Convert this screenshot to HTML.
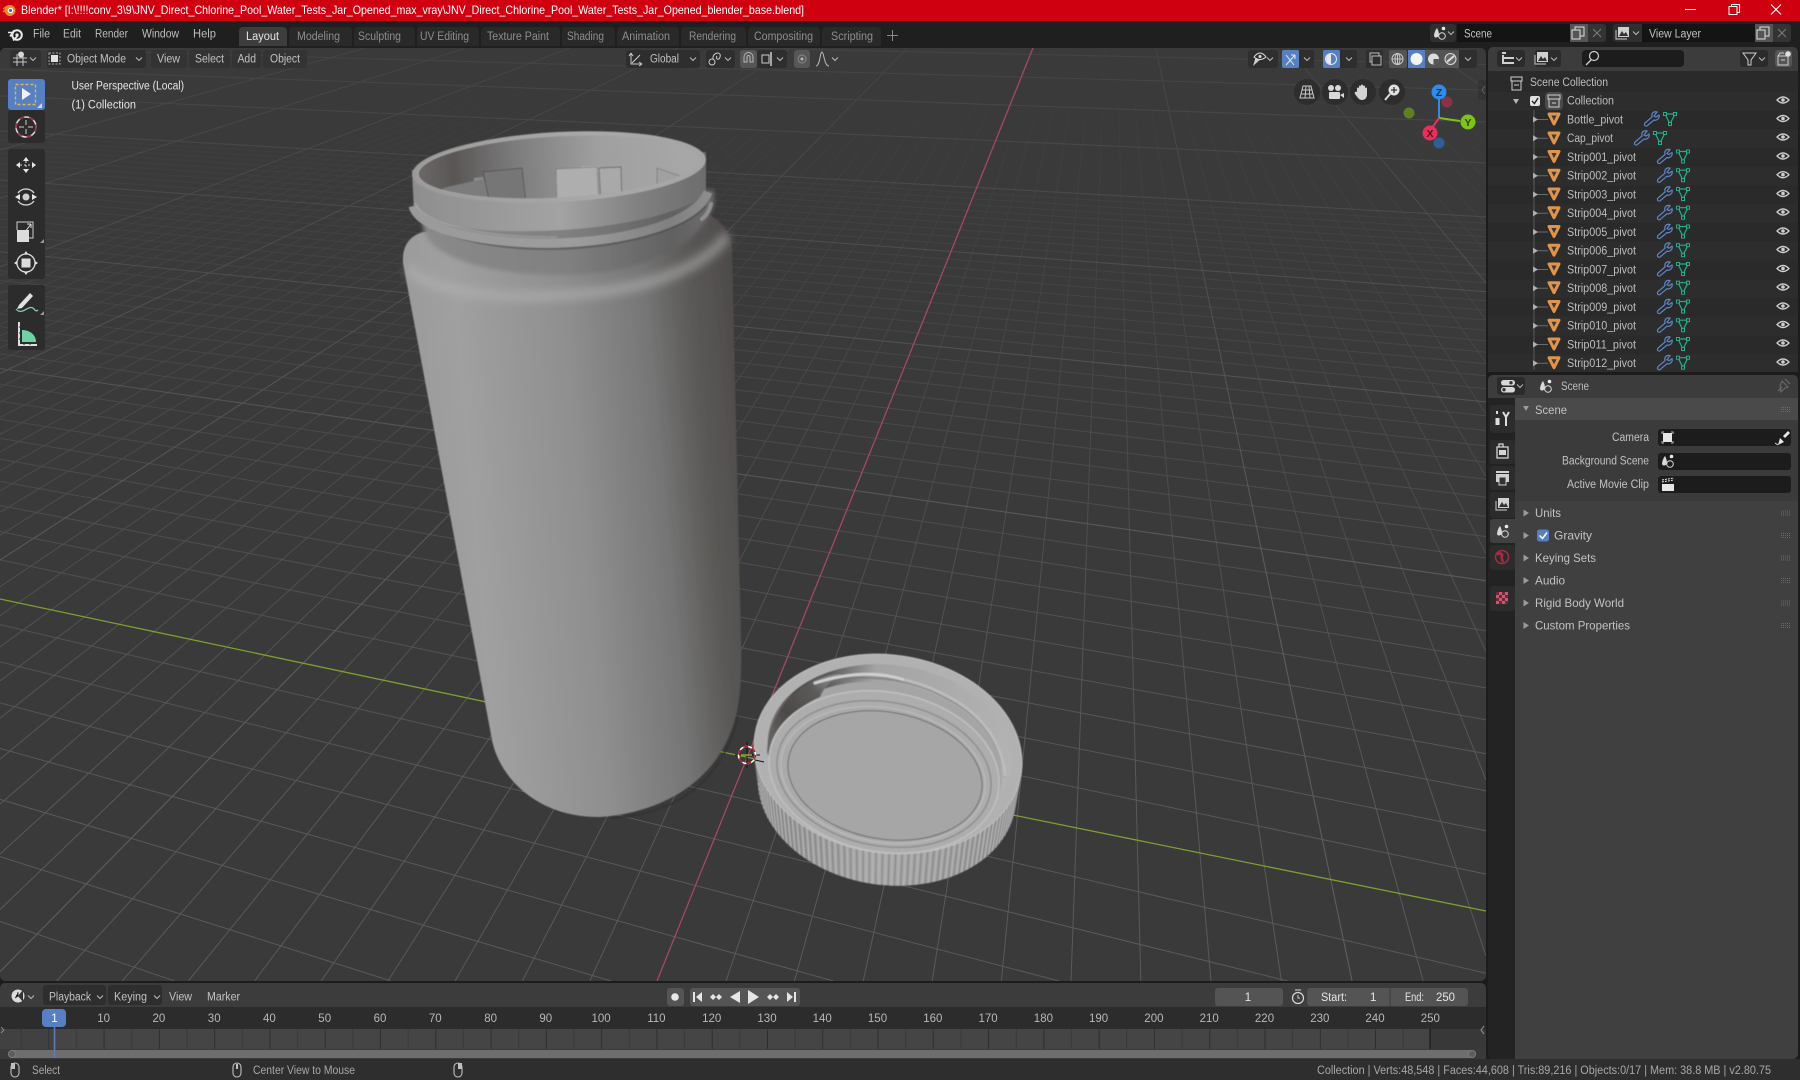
<!DOCTYPE html>
<html><head><meta charset="utf-8"><title>Blender</title>
<style>
html,body{margin:0;padding:0;background:#1c1c1c;width:1800px;height:1080px;overflow:hidden}
svg{display:block;position:absolute;left:0;top:0}
text{font-family:"Liberation Sans",sans-serif;font-size:11.5px;fill:#c2c2c2}
.t{fill:#8e8e8e}
.w{fill:#e6e6e6}
.o{fill:#bdbdbd}
.m{text-anchor:middle}
.e{text-anchor:end}
.n{fill:#b8b8b8;text-anchor:middle;font-size:11.5px}
.s{fill:#a8a8a8}
</style></head><body>
<svg width="1800" height="1080" viewBox="0 0 1800 1080" xmlns="http://www.w3.org/2000/svg">
<defs>
<clipPath id="vp"><rect x="0" y="48" width="1486" height="933" rx="5"/></clipPath>
<linearGradient id="fadeG" gradientUnits="userSpaceOnUse" x1="0" y1="90" x2="0" y2="800"><stop offset="0" stop-color="#111"/><stop offset="1" stop-color="#fff"/></linearGradient>
<mask id="fade" maskUnits="userSpaceOnUse" x="0" y="0" width="1800" height="1080"><rect width="1800" height="1080" fill="url(#fadeG)"/></mask>
<linearGradient id="fadeH" gradientUnits="userSpaceOnUse" x1="0" y1="48" x2="0" y2="620"><stop offset="0" stop-color="#444"/><stop offset="1" stop-color="#fff"/></linearGradient>
<mask id="fade2" maskUnits="userSpaceOnUse" x="0" y="0" width="1800" height="1080"><rect width="1800" height="1080" fill="url(#fadeH)"/></mask>
<linearGradient id="body" gradientUnits="userSpaceOnUse" x1="410" y1="470" x2="745" y2="440"><stop offset="0" stop-color="#9a9a9a"/><stop offset=".18" stop-color="#a0a0a0"/><stop offset=".5" stop-color="#8f8f8f"/><stop offset=".74" stop-color="#767676"/><stop offset=".87" stop-color="#5c5a58"/><stop offset="1" stop-color="#4e4b4a"/></linearGradient>
<linearGradient id="neck" gradientUnits="userSpaceOnUse" x1="420" y1="0" x2="715" y2="0"><stop offset="0" stop-color="#8a8a8a"/><stop offset=".5" stop-color="#808080"/><stop offset=".85" stop-color="#626161"/><stop offset="1" stop-color="#6c6b6b"/></linearGradient>
<linearGradient id="cyl" gradientUnits="userSpaceOnUse" x1="412" y1="0" x2="708" y2="0"><stop offset="0" stop-color="#8e8e8e"/><stop offset=".5" stop-color="#a3a3a3"/><stop offset=".78" stop-color="#7f7f7f"/><stop offset="1" stop-color="#6c6c6c"/></linearGradient>
<linearGradient id="lip" gradientUnits="userSpaceOnUse" x1="412" y1="0" x2="708" y2="0"><stop offset="0" stop-color="#9a9a9a"/><stop offset=".6" stop-color="#a9a9a9"/><stop offset="1" stop-color="#a5a5a5"/></linearGradient>
<linearGradient id="inner" gradientUnits="userSpaceOnUse" x1="420" y1="0" x2="698" y2="0"><stop offset="0" stop-color="#6b6766"/><stop offset=".12" stop-color="#595655"/><stop offset=".35" stop-color="#7d7d7d"/><stop offset=".65" stop-color="#a0a0a0"/><stop offset="1" stop-color="#a8a8a8"/></linearGradient>
<linearGradient id="ring" gradientUnits="userSpaceOnUse" x1="410" y1="0" x2="715" y2="0"><stop offset="0" stop-color="#9a9a9a"/><stop offset=".55" stop-color="#9d9d9d"/><stop offset=".85" stop-color="#808080"/><stop offset="1" stop-color="#8f8f8f"/></linearGradient>
<linearGradient id="capWall" gradientUnits="userSpaceOnUse" x1="767" y1="720" x2="1012" y2="740"><stop offset="0" stop-color="#7c7a79"/><stop offset=".08" stop-color="#4e4b4a"/><stop offset=".2" stop-color="#5e5c5b"/><stop offset=".38" stop-color="#a4a4a4"/><stop offset="1" stop-color="#b3b3b3"/></linearGradient>
<linearGradient id="cres" gradientUnits="userSpaceOnUse" x1="768" y1="740" x2="835" y2="680"><stop offset="0" stop-color="#686665"/><stop offset=".35" stop-color="#4c4948"/><stop offset=".75" stop-color="#5c5a59"/><stop offset="1" stop-color="#8c8c8c"/></linearGradient>
<linearGradient id="skirt" gradientUnits="userSpaceOnUse" x1="760" y1="800" x2="1020" y2="830"><stop offset="0" stop-color="#8f8f8f"/><stop offset=".5" stop-color="#a8a8a8"/><stop offset="1" stop-color="#9a9a9a"/></linearGradient>
<filter id="b1" x="-5%" y="-5%" width="110%" height="110%"><feGaussianBlur stdDeviation=".5"/></filter>
<filter id="b3" x="-20%" y="-20%" width="140%" height="140%"><feGaussianBlur stdDeviation="5"/></filter>
<filter id="b2" x="-10%" y="-10%" width="120%" height="120%"><feGaussianBlur stdDeviation="2"/></filter>
<pattern id="rows" patternUnits="userSpaceOnUse" width="10" height="37.5" patternTransform="translate(0,73)"><rect width="10" height="18.75" fill="#2a2a2a"/><rect y="18.75" width="10" height="18.75" fill="#2d2d2d"/></pattern>
<pattern id="tl" patternUnits="userSpaceOnUse" width="55.28" height="10" patternTransform="translate(103.6,0)"><rect width="55.28" height="10" fill="#454545"/><rect width="1" height="10" fill="#2f2f2f"/><rect x="27.6" width="1" height="10" fill="#383838"/></pattern>
<g id="eye"><path d="M-6,0Q0,-6 6,0Q0,6 -6,0Z" fill="none" stroke="#cfcfcf" stroke-width="1.3"/><circle r="1.8" fill="#cfcfcf"/></g>
<g id="wr"><path d="M6,-7C3,-8 0,-6 1,-2L-6,4C-8,7 -4,8 -3,6L3,1C6,2 9,-1 8,-4L5,-2L3,-3Z" fill="none" stroke="#5f86c6" stroke-width="1.2"/></g>
<g id="ms"><path d="M-5,-5H5L0,5Z" fill="none" stroke="#1fb08a" stroke-width="1.2"/><rect x="-6.5" y="-6.5" width="3" height="3" fill="#2a2a2a" stroke="#1fb08a"/><rect x="3.5" y="-6.5" width="3" height="3" fill="#2a2a2a" stroke="#1fb08a"/><rect x="-1.5" y="3.5" width="3" height="3" fill="#2a2a2a" stroke="#1fb08a"/></g>
<g id="ob"><path d="M-5,-5H5L0,5Z" fill="#3a3a3a" stroke="#e0944c" stroke-width="3" stroke-linejoin="round"/></g>
<g id="chev"><path d="M-3,-1.5L0,1.5L3,-1.5" fill="none" stroke="#b5b5b5" stroke-width="1.1"/></g>
<g id="scn"><path d="M-6,3C-6,0 -4,-4 -3,-5C-2,-3 -1,-1 -1,2C-1,4 -5,6 -6,3Z" fill="#d8d8d8"/><circle cx="2" cy="3" r="3.3" fill="none" stroke="#d8d8d8" stroke-width="1"/><circle cx="3.5" cy="-4.5" r="1.8" fill="#e8e8e8"/></g>
<g id="img"><rect x="-5" y="-6" width="11" height="10" fill="#d0d0d0"/><path d="M-4,3L-1,-2L1,1L3,-1L5,3Z" fill="#333"/><path d="M-7,-3V6H4" fill="none" stroke="#b0b0b0" stroke-width="1.2"/></g>
<g id="copy"><rect x="-3" y="-6" width="9" height="9" fill="none" stroke="#d5d5d5" stroke-width="1.1"/><rect x="-6" y="-3" width="8" height="9" fill="#555" stroke="#d5d5d5" stroke-width="1.1"/></g>
<g id="x"><path d="M-4,-4L4,4M4,-4L-4,4" stroke="#7a7a7a" stroke-width="1.1"/></g>
<g id="grip"><path d="M-5,-2h10M-5,0h10M-5,2h10" stroke="#6a6a6a" stroke-dasharray="1 1" stroke-width="1"/></g>
<g id="arr"><path d="M-2.5,-3.5L3,0L-2.5,3.5Z" fill="#9a9a9a"/></g>
<g id="mouse"><rect x="-4" y="-7" width="8" height="14" rx="4" fill="none" stroke="#c0c0c0" stroke-width="1.1"/></g>
</defs>

<!-- window bg -->
<rect width="1800" height="1080" fill="#1c1c1c"/>
<!-- title bar -->
<rect width="1800" height="21" fill="#cf000f"/>
<circle cx="10" cy="10.500" r="5.500" fill="#f08a2c"/><circle cx="10.500" cy="10.500" r="2.800" fill="#fff"/><circle cx="10.500" cy="10.500" r="1.500" fill="#2a6ab0"/><path d="M3,12L7,8M3,9L7,6" stroke="#f08a2c" stroke-width="1.300"/>
<text x="21" y="14" textLength="783" lengthAdjust="spacingAndGlyphs" style="fill:#fff;font-size:12px">Blender* [I:\!!!!conv_3\9\JNV_Direct_Chlorine_Pool_Water_Tests_Jar_Opened_max_vray\JNV_Direct_Chlorine_Pool_Water_Tests_Jar_Opened_blender_base.blend]</text>
<path d="M1685,9.500H1696" stroke="#fff" stroke-width="1"/>
<rect x="1729" y="6.500" width="8" height="8" fill="none" stroke="#fff"/><path d="M1731.500,6.500V4.500H1739.500V12.500H1737" fill="none" stroke="#fff"/>
<path d="M1771,4.500L1781,14.500M1781,4.500L1771,14.500" stroke="#fff" stroke-width="1.100"/>

<!-- top bar -->
<rect y="21" width="1800" height="27" fill="#1f1f1f"/>
<circle cx="17" cy="35" r="4.800" fill="none" stroke="#e8e8e8" stroke-width="2"/><circle cx="17" cy="35" r="1.600" fill="#e8e8e8"/><path d="M8,32.500H14M10,36.500L14,30.500M13,40.500L18,35.500" stroke="#e8e8e8" stroke-width="1.600"/>
<text x="33" y="37.500" textLength="17" lengthAdjust="spacingAndGlyphs" class="o">File</text>
<text x="63" y="37.500" textLength="18" lengthAdjust="spacingAndGlyphs" class="o">Edit</text>
<text x="95" y="37.500" textLength="33" lengthAdjust="spacingAndGlyphs" class="o">Render</text>
<text x="142" y="37.500" textLength="37" lengthAdjust="spacingAndGlyphs" class="o">Window</text>
<text x="193" y="37.500" textLength="23" lengthAdjust="spacingAndGlyphs" class="o">Help</text>
<path d="M239,46V31a4,4 0 0 1 4,-4H283a4,4 0 0 1 4,4V46Z" fill="#3d3d3d"/>
<path d="M289,46V31a4,4 0 0 1 4,-4H348a4,4 0 0 1 4,4V46Z M354,46V31a4,4 0 0 1 4,-4H411a4,4 0 0 1 4,4V46Z M417,46V31a4,4 0 0 1 4,-4H475a4,4 0 0 1 4,4V46Z M481,46V31a4,4 0 0 1 4,-4H556a4,4 0 0 1 4,4V46Z M562,46V31a4,4 0 0 1 4,-4H611a4,4 0 0 1 4,4V46Z M617,46V31a4,4 0 0 1 4,-4H675a4,4 0 0 1 4,4V46Z M681,46V31a4,4 0 0 1 4,-4H742a4,4 0 0 1 4,4V46Z M748,46V31a4,4 0 0 1 4,-4H816a4,4 0 0 1 4,4V46Z M822,46V31a4,4 0 0 1 4,-4H877a4,4 0 0 1 4,4V46Z" fill="#292929"/>
<text x="246" y="40" textLength="33" lengthAdjust="spacingAndGlyphs" class="w">Layout</text>
<text x="297" y="40" textLength="43" lengthAdjust="spacingAndGlyphs" class="t">Modeling</text>
<text x="358" y="40" textLength="43" lengthAdjust="spacingAndGlyphs" class="t">Sculpting</text>
<text x="420" y="40" textLength="49" lengthAdjust="spacingAndGlyphs" class="t">UV Editing</text>
<text x="487" y="40" textLength="62" lengthAdjust="spacingAndGlyphs" class="t">Texture Paint</text>
<text x="567" y="40" textLength="37" lengthAdjust="spacingAndGlyphs" class="t">Shading</text>
<text x="622" y="40" textLength="48" lengthAdjust="spacingAndGlyphs" class="t">Animation</text>
<text x="689" y="40" textLength="47" lengthAdjust="spacingAndGlyphs" class="t">Rendering</text>
<text x="754" y="40" textLength="59" lengthAdjust="spacingAndGlyphs" class="t">Compositing</text>
<text x="831" y="40" textLength="42" lengthAdjust="spacingAndGlyphs" class="t">Scripting</text>
<path d="M887,35.500H898M892.500,30V41" stroke="#8a8a8a"/>

<!-- scene selector -->
<rect x="1430" y="24" width="26" height="18" rx="3" fill="#2f2f2f"/>
<use href="#scn" x="1440" y="33"/><use href="#chev" x="1451" y="33"/>
<rect x="1457" y="24" width="113" height="18" fill="#141414"/>
<text x="1464" y="37.500" textLength="28" lengthAdjust="spacingAndGlyphs">Scene</text>
<rect x="1570" y="24" width="18" height="18" fill="#545454"/><use href="#copy" x="1578" y="33"/>
<path d="M1588,24H1603a3,3 0 0 1 3,3V39a3,3 0 0 1 -3,3H1588Z" fill="#333"/><use href="#x" x="1597" y="33"/>
<path d="M1616,24H1642V42H1616a3,3 0 0 1 -3,-3V27a3,3 0 0 1 3,-3Z" fill="#2f2f2f"/>
<use href="#img" x="1623" y="33"/><use href="#chev" x="1636" y="33"/>
<rect x="1642" y="24" width="113" height="18" fill="#141414"/>
<text x="1649" y="37.500" textLength="52" lengthAdjust="spacingAndGlyphs">View Layer</text>
<rect x="1755" y="24" width="18" height="18" fill="#545454"/><use href="#copy" x="1763" y="33"/>
<path d="M1773,24H1788a3,3 0 0 1 3,3V39a3,3 0 0 1 -3,3H1773Z" fill="#333"/><use href="#x" x="1782" y="33"/>

<!-- VIEWPORT -->
<g clip-path="url(#vp)">
<rect x="0" y="48" width="1486" height="933" fill="#3a3a3a"/>
<g id="gridMinor" stroke="#5a5a5a" stroke-width="1" mask="url(#fade)"></g>
<g id="gridMajor" stroke="#5e5e5e" stroke-width="1.100" mask="url(#fade2)"></g>
<path d="M0,599L760,760" stroke="#7f9f2f" stroke-width="1.300"/>
<path d="M880,788L1486,911" stroke="#7f9f2f" stroke-width="1.300"/>
<path d="M657,981L1033,48" stroke="#a24a5e" stroke-width="1.300"/>

<!-- BOTTLE -->
<g filter="url(#b1)">
<path d="M610,818C680,815 724,777 738,716" fill="none" stroke="#333" stroke-width="1.500"/>
<path d="M403,263C402,245 410,236 423,232L710,215C722,222 731,232 732,250L741,640C742,675 740,700 736,715C722,775 670,812 600,817C540,818 500,780 492,740Z" fill="url(#body)"/>
<path d="M408,268C440,300 530,300 600,292C660,285 710,262 727,235" fill="none" stroke="#b3b3b3" stroke-width="9" opacity=".7" filter="url(#b3)"/>
<path d="M423,225C425,255 480,274 557,275C630,275 695,255 714,205L714,190L423,190Z" fill="url(#neck)" filter="url(#b2)"/>
<path d="M412,170L414,212C440,240 640,240 706,195L706,152Z" fill="url(#cyl)"/>
<path d="M418,216C440,240 500,250 557,249C625,247 685,230 706,206" fill="none" stroke="#4a4a4a" stroke-width="2" opacity=".55"/>
<path d="M413,206C420,232 490,244 557,243C630,241 696,222 708,192" fill="none" stroke="url(#ring)" stroke-width="9"/>
<path d="M415,203C425,226 490,238 557,237" fill="none" stroke="#b2b2b2" stroke-width="1.500" opacity=".5"/>
<path d="M702,219C707,215 710,209 711,204" stroke="#8f8f8f" stroke-width="4" fill="none" stroke-linecap="round"/>
<ellipse cx="559" cy="167" rx="147" ry="35" transform="rotate(-3 559 167)" fill="url(#lip)"/>
<ellipse cx="558" cy="167" rx="140" ry="31" transform="rotate(-3 558 167)" fill="url(#inner)"/>
<clipPath id="op"><ellipse cx="558" cy="167" rx="140" ry="31" transform="rotate(-3 558 167)"/></clipPath>
<g clip-path="url(#op)">
<path d="M474,178L483,177L490,200H474Z" fill="#8c8c8c"/>
<path d="M443,188L483,179L490,200L443,204Z" fill="#7c7c7c"/>
<path d="M483,172L522,168L526,204L490,204Z" fill="#767676" stroke="#4a4a4a" stroke-width=".7"/>
<path d="M581,166H598L599,172H581Z" fill="#a9a9a9"/>
<path d="M556,169L597,167L599,204L557,204Z" fill="#aeaeae" stroke="#6c6c6c" stroke-width=".5"/>
<path d="M599,168L621,167L622,204L601,204Z" fill="#a9a9a9" stroke="#555" stroke-width=".7"/>
<path d="M657,168L683,177L657,184Z" fill="#a0a0a0" stroke="#6a6a6a" stroke-width=".6"/>
</g>
<ellipse cx="558" cy="167" rx="140" ry="31" transform="rotate(-3 558 167)" fill="none" stroke="#a6a6a6" stroke-width="1"/>
</g>

<!-- CAP -->
<g filter="url(#b1)">
<path d="M753.500,745.500L758,782L1016,798L1022.500,762.500Z" fill="url(#skirt)"/>
<ellipse cx="887" cy="790" rx="129" ry="95" transform="rotate(8 887 790)" fill="url(#skirt)"/>
<g id="knurl" stroke-width="1"></g>
<ellipse cx="888" cy="754" rx="134.500" ry="99" transform="rotate(8 888 754)" fill="#b1b1b1" stroke="#c0c0c0" stroke-width="1"/>
<ellipse cx="889.500" cy="752" rx="122.500" ry="87" transform="rotate(8 889.500 752)" fill="url(#capWall)"/>
<ellipse cx="885" cy="765" rx="118" ry="82" transform="rotate(10 885 765)" fill="#a5a5a5"/>
<path d="M767,752C768,722 785,694 815,680C825,676 835,674 842,674C832,680 826,684 820,697C795,708 775,728 770,760Z" fill="url(#cres)"/>
<path d="M815,685C850,674 905,674 945,697C985,717 1002,747 1005,777" fill="none" stroke="#757575" stroke-width="2.500" opacity=".55"/>
<path d="M815,683C850,672 880,672 905,680" fill="none" stroke="#cfcfcf" stroke-width="3" stroke-linecap="round"/>
<path d="M905,680C925,685 935,690 945,695C985,715 1002,745 1005,775" fill="none" stroke="#bcbcbc" stroke-width="3" stroke-linecap="round"/>
<ellipse cx="884" cy="772" rx="116" ry="80" transform="rotate(10 884 772)" fill="#adadad" stroke="#c0c0c0" stroke-width="1.500"/>
<ellipse cx="884" cy="774" rx="108" ry="72" transform="rotate(10 884 774)" fill="none" stroke="#8e8e8e" stroke-width="1.500"/>
<ellipse cx="883" cy="775" rx="103" ry="67" transform="rotate(10 883 775)" fill="#aaaaaa" stroke="#bdbdbd" stroke-width="1"/>
<ellipse cx="885" cy="775.500" rx="98" ry="63.500" transform="rotate(10 885 775.500)" fill="#a6a6a6" stroke="#6b6b6b" stroke-width="1"/>
</g>

<!-- 3D cursor -->
<g>
<path d="M735,755H760M747,742V768M755,760L764,762" stroke="#111" stroke-width="1"/>
<circle cx="747" cy="755" r="8.500" fill="none" stroke="#fff" stroke-width="1.500"/>
<circle cx="747" cy="755" r="8.500" fill="none" stroke="#c0142e" stroke-width="1.500" stroke-dasharray="5 4"/>
<path d="M741,755H752" stroke="#88aa33" stroke-width="1.500"/>
</g>

<!-- text overlay -->
<text x="71.500" y="89.500" textLength="112.500" lengthAdjust="spacingAndGlyphs" class="w">User Perspective (Local)</text>
<text x="71.500" y="108.500" textLength="64.500" lengthAdjust="spacingAndGlyphs" class="w">(1) Collection</text>

<!-- viewport header -->
<rect x="10" y="50" width="31" height="18" rx="3" fill="#2e2e2e" opacity=".7"/>
<path d="M13,58H27M13,62H27M17,54V66M23,54V66" stroke="#c5c5c5" stroke-width="1"/><circle cx="21" cy="54.500" r="3" fill="#d8d8d8"/><use href="#chev" x="33" y="59"/>
<rect x="47" y="50" width="99" height="18" rx="3" fill="#2e2e2e"/>
<rect x="49" y="53" width="11" height="11" fill="none" stroke="#aaa" stroke-dasharray="2 1.500"/><rect x="51" y="55" width="7" height="7" fill="#e0e0e0"/>
<text x="67" y="62.500" textLength="59" lengthAdjust="spacingAndGlyphs">Object Mode</text><use href="#chev" x="139" y="59"/>
<rect x="151" y="50" width="36" height="18" rx="3" fill="#2e2e2e" opacity=".6"/><rect x="189" y="50" width="41" height="18" rx="3" fill="#2e2e2e" opacity=".6"/><rect x="232" y="50" width="29" height="18" rx="3" fill="#2e2e2e" opacity=".6"/><rect x="263" y="50" width="44" height="18" rx="3" fill="#2e2e2e" opacity=".6"/>
<text x="157" y="62.500" textLength="23" lengthAdjust="spacingAndGlyphs">View</text>
<text x="195" y="62.500" textLength="29" lengthAdjust="spacingAndGlyphs">Select</text>
<text x="237.500" y="62.500" textLength="18.500" lengthAdjust="spacingAndGlyphs">Add</text>
<text x="270" y="62.500" textLength="30" lengthAdjust="spacingAndGlyphs">Object</text>

<rect x="626" y="50" width="74" height="18" rx="3" fill="#2e2e2e"/>
<path d="M631,53V64H642M631,53L629,56M631,53L633,56M642,64L639,62M642,64L639,66M632,63L640,55" fill="none" stroke="#c8c8c8"/>
<text x="650" y="62.500" textLength="29" lengthAdjust="spacingAndGlyphs">Global</text><use href="#chev" x="693" y="59"/>
<rect x="706" y="50" width="29" height="18" rx="3" fill="#2e2e2e"/>
<circle cx="712" cy="62" r="3" fill="none" stroke="#ccc"/><path d="M713,59C712,52 722,51 720,57C719,61 715,59 717,56" fill="none" stroke="#ccc"/><use href="#chev" x="728" y="59"/>
<rect x="740" y="50" width="17" height="18" rx="3" fill="#565656"/>
<path d="M744,62V57A4.500,4.500 0 0 1 753,57V62H750V57A1.500,1.500 0 0 0 747,57V62Z" fill="none" stroke="#b8b8b8"/>
<rect x="757" y="50" width="30" height="18" rx="3" fill="#2e2e2e"/>
<rect x="762" y="55" width="7" height="8" fill="none" stroke="#ccc"/><path d="M771,52V66" stroke="#ccc" stroke-width="1.500"/><use href="#chev" x="780" y="59"/>
<rect x="794" y="50" width="16" height="18" rx="3" fill="#565656"/><circle cx="802" cy="59" r="4" fill="none" stroke="#8a8a8a"/><circle cx="802" cy="59" r="1.500" fill="#b8b8b8"/>
<path d="M816,66C820,66 820,52 822,52C824,52 824,66 829,66" fill="none" stroke="#bbb"/><use href="#chev" x="835" y="59"/>

<rect x="1248" y="50" width="30" height="18" rx="3" fill="#2e2e2e"/>
<path d="M1253,66L1256,56L1262,58Z" fill="#ccc"/><path d="M1254,57Q1260,49 1266,57Q1260,62 1254,57Z" fill="#2e2e2e" stroke="#ddd"/><circle cx="1260" cy="56.500" r="1.500" fill="#ddd"/><use href="#chev" x="1270" y="59"/>
<rect x="1282" y="50" width="17" height="18" rx="2" fill="#5680c2"/><path d="M1286,65L1295,55M1295,55H1291M1295,55V59M1286,55L1294,65" stroke="#e8e8e8" fill="none"/><rect x="1299" y="50" width="15" height="18" rx="2" fill="#2e2e2e"/><use href="#chev" x="1307" y="59"/>
<rect x="1323" y="50" width="17" height="18" rx="2" fill="#5680c2"/><circle cx="1331" cy="59" r="5.500" fill="none" stroke="#e8e8e8"/><path d="M1331,54A5,5 0 0 0 1331,64Z" fill="#e8e8e8"/><rect x="1340" y="50" width="17" height="18" rx="2" fill="#2e2e2e"/><use href="#chev" x="1349" y="59"/>
<rect x="1366" y="50" width="17" height="18" rx="2" fill="#2e2e2e"/><rect x="1370" y="53" width="9" height="9" fill="none" stroke="#bbb"/><rect x="1372" y="56" width="9" height="9" fill="#2e2e2e" stroke="#bbb"/>
<rect x="1389" y="50" width="88" height="18" rx="3" fill="#2e2e2e"/>
<rect x="1389" y="50" width="18" height="18" rx="2" fill="#545454"/><rect x="1408" y="50" width="17" height="18" fill="#5680c2"/><rect x="1425" y="50" width="17" height="18" fill="#545454"/><rect x="1442" y="50" width="17" height="18" fill="#545454"/>
<circle cx="1397.500" cy="59" r="5.500" fill="none" stroke="#c8c8c8"/><path d="M1392,59H1403M1397.500,53.500V64.500" stroke="#c8c8c8"/><ellipse cx="1397.500" cy="59" rx="2.500" ry="5.500" fill="none" stroke="#c8c8c8"/>
<circle cx="1416.500" cy="59" r="6" fill="#f4f4f4"/>
<circle cx="1433.500" cy="59" r="5.500" fill="#dcdcdc"/><path d="M1433.500,59L1439,59A5.500,5.500 0 0 1 1433.500,64.500Z" fill="#555"/>
<circle cx="1450.500" cy="59" r="5.500" fill="#666" stroke="#ddd"/><path d="M1447,62L1454,56" stroke="#ddd" stroke-width="2"/>
<use href="#chev" x="1468" y="59"/>

<!-- nav gizmo -->
<circle cx="1307" cy="92" r="13" fill="#2d2d2d"/><circle cx="1335" cy="92" r="13" fill="#2d2d2d"/><circle cx="1363" cy="92" r="13" fill="#2d2d2d"/><circle cx="1392" cy="92" r="13" fill="#2d2d2d"/>
<path d="M1303,86H1311L1314,98H1300ZM1302,90H1312M1301,94H1313M1306,86L1305,98M1309,86L1310,98" fill="none" stroke="#c9c9c9"/>
<circle cx="1331" cy="88" r="3" fill="#d8d8d8"/><circle cx="1338" cy="88" r="3" fill="#d8d8d8"/><rect x="1329" y="92" width="11" height="7" rx="1" fill="#d8d8d8"/><path d="M1340,95L1344,93V98Z" fill="#d8d8d8"/>
<path d="M1357,92V88.500a1,1 0 0 1 2,0V86.500a1,1 0 0 1 2,0V85.500a1,1 0 0 1 2,0V86.500a1,1 0 0 1 2,0V88.500a1,1 0 0 1 2,0V94C1367,98 1365,100 1362,100C1359,100 1358,98 1355,94C1354,92 1356,91 1357,92Z" fill="#d4d4d4"/>
<circle cx="1394" cy="90" r="5.500" fill="#e0e0e0"/><path d="M1394,87V93M1391,90H1397" stroke="#333" stroke-width="1.300"/><path d="M1390,94L1385,100" stroke="#d8d8d8" stroke-width="2"/>

<circle cx="1447" cy="102" r="5.500" fill="#8a3246"/><circle cx="1409" cy="113" r="5.500" fill="#5e7f22"/><circle cx="1439" cy="143" r="5.500" fill="#2f5e96"/>
<path d="M1439,118V98" stroke="#2e8ceb" stroke-width="2"/><path d="M1439,118L1460,121" stroke="#7fc31a" stroke-width="2"/><path d="M1439,118L1432,128" stroke="#e8305a" stroke-width="2"/>
<circle cx="1439" cy="92" r="7.500" fill="#2e8ceb"/><text x="1439" y="96" class="m" style="fill:#14304d;font-size:10.500px;font-weight:bold">Z</text>
<circle cx="1468" cy="122" r="7.500" fill="#7fc31a"/><text x="1468" y="126" class="m" style="fill:#2b440a;font-size:10.500px;font-weight:bold">Y</text>
<circle cx="1430" cy="133" r="7.500" fill="#e8305a"/><text x="1430" y="137" class="m" style="fill:#54101f;font-size:10.500px;font-weight:bold">X</text>
<path d="M1485,86L1482,90L1485,94" fill="none" stroke="#888"/>
<rect x="1478" y="80" width="8" height="20" rx="3" fill="#2a2a2a" opacity=".4"/>

<!-- toolbar -->
<rect x="8" y="79" width="37" height="31" rx="3" fill="#5680c2"/>
<rect x="8" y="110" width="37" height="33" rx="3" fill="#2c2c2c"/>
<rect x="8" y="149" width="37" height="130" rx="3" fill="#2c2c2c"/>
<rect x="8" y="285" width="37" height="65" rx="3" fill="#2c2c2c"/>
<rect x="15.500" y="84.500" width="20" height="20" fill="none" stroke="#d8b75d" stroke-width="1.400" stroke-dasharray="3 2"/>
<path d="M22,88V100L31,94Z" fill="#f2f2f2"/><path d="M37,108L42,103V108Z" fill="#cfdcf0"/>
<circle cx="26" cy="127" r="10" fill="none" stroke="#dcdcdc" stroke-width="1.500"/><circle cx="26" cy="127" r="10" fill="none" stroke="#a42a45" stroke-width="1.500" stroke-dasharray="5 5"/><path d="M26,120V125M26,129V134M19,127H24M28,127H33" stroke="#cfcfcf"/>
<path d="M26,157L23,161H29ZM26,173L23,169H29ZM16,165L20,162V168ZM36,165L32,162V168Z" fill="#e6e6e6"/><path d="M26,161V169M20,165H32" stroke="#d8d8d8" stroke-dasharray="2 2"/>
<circle cx="26" cy="197" r="3.500" fill="#d0d0d0" transform="rotate(45 26 197)"/><path d="M18,193A10,10 0 0 1 34,193M34,201A10,10 0 0 1 18,201" fill="none" stroke="#dcdcdc" stroke-width="1.300"/><path d="M15,197L20,194V200ZM37,197L32,194V200Z" fill="#e6e6e6"/>
<rect x="17" y="230" width="12" height="12" fill="#dcdcdc"/><path d="M17,230V222H33V238H29" fill="none" stroke="#cfcfcf"/><path d="M25,232L31,224M31,224H27M31,224V228" stroke="#e0e0e0"/><path d="M40,243L44,239V243Z" fill="#999"/>
<circle cx="26" cy="263" r="9" fill="none" stroke="#dcdcdc" stroke-width="1.300"/><rect x="21.500" y="258.500" width="9" height="9" fill="#dcdcdc"/><path d="M26,251L24,254H28ZM26,275L24,272H28ZM14,263L17,261V265ZM38,263L35,261V265Z" fill="#e6e6e6"/>
<path d="M19,305L30,293L33,296L22,308L17,309Z" fill="#e2e2e2"/><path d="M16,309C22,316 28,305 33,308C35,310 36,312 38,310" fill="none" stroke="#7fd0a8" stroke-width="1.300"/><path d="M40,315L44,311V315Z" fill="#999"/>
<path d="M22,330V342H36C36,335 30,330 22,330Z" fill="#6dd3a4"/><path d="M19,322V345H37" fill="none" stroke="#e0e0e0" stroke-width="2"/><path d="M19,327H22M19,333H22M19,339H22M24,345V342M30,345V342" stroke="#2c2c2c"/>
</g>

<!-- OUTLINER -->
<rect x="1488" y="47" width="310" height="325" rx="5" fill="#2a2a2a"/>
<path d="M1488,71V52a5,5 0 0 1 5,-5H1793a5,5 0 0 1 5,5V71Z" fill="#3c3c3c"/>
<rect x="1488" y="73" width="310" height="299" fill="url(#rows)"/>
<rect x="1497" y="50" width="28" height="17" rx="3" fill="#2b2b2b"/>
<path d="M1502,53H1506M1505,58H1514M1505,63H1514M1503,55V63H1505M1503,58H1505" stroke="#d0d0d0" stroke-width="2" fill="none"/><use href="#chev" x="1519" y="59"/>
<rect x="1535" y="50" width="26" height="17" rx="3" fill="#2b2b2b"/><use href="#img" x="1542" y="58"/><use href="#chev" x="1554" y="59"/>
<rect x="1582" y="50" width="102" height="17" rx="4" fill="#1c1c1c"/>
<circle cx="1594" cy="56" r="4.500" fill="none" stroke="#d0d0d0" stroke-width="1.200"/><path d="M1591,60L1586,65" stroke="#d0d0d0" stroke-width="1.300"/>
<rect x="1740" y="50" width="28" height="17" rx="3" fill="#2b2b2b"/><path d="M1743,53H1756L1751,60V65L1748,65V60Z" fill="none" stroke="#cfcfcf" transform="translate(0,0)"/><use href="#chev" x="1762" y="59"/>
<rect x="1775" y="50" width="17" height="17" rx="3" fill="#565656"/><path d="M1778,56H1788V65H1778ZM1778,56L1780,53H1784M1781,60H1785" fill="none" stroke="#cfcfcf"/><circle cx="1788" cy="54" r="2.800" fill="#e0e0e0"/>

<path d="M1511,77H1522V81H1511ZM1512,81V90H1521V81M1514,85H1519" fill="none" stroke="#d0d0d0"/>
<text x="1530" y="86" textLength="78" lengthAdjust="spacingAndGlyphs" class="o">Scene Collection</text>
<path d="M1513,99L1519,99L1516,104Z" fill="#b5b5b5"/>
<rect x="1530" y="96" width="10" height="10" rx="2" fill="#e2e2e2"/><path d="M1532,101L1534.500,103.500L1538,98" fill="none" stroke="#222" stroke-width="1.400"/>
<rect x="1545" y="92" width="18" height="18" rx="4" fill="#4a4a4a"/>
<path d="M1548,95H1560V99H1548ZM1549,99V107H1559V99M1552,103H1556" fill="none" stroke="#d0d0d0"/>
<text x="1567" y="104.500" textLength="47" lengthAdjust="spacingAndGlyphs" class="o">Collection</text>
<path d="M1534,110V370" stroke="#5a5a5a"/>
<g id="tree" stroke="#6a6a6a"><path d="M1534,119.500H1548M1534,138.200H1548M1534,157H1548M1534,175.700H1548M1534,194.500H1548M1534,213.200H1548M1534,232H1548M1534,250.700H1548M1534,269.500H1548M1534,288.200H1548M1534,307H1548M1534,325.700H1548M1534,344.500H1548M1534,363.200H1548"/></g>
<g fill="#b0b0b0"><path d="M1533,116.500L1538,119.500L1533,122.500ZM1533,135.200L1538,138.200L1533,141.200ZM1533,154L1538,157L1533,160ZM1533,172.700L1538,175.700L1533,178.700ZM1533,191.500L1538,194.500L1533,197.500ZM1533,210.200L1538,213.200L1533,216.200ZM1533,229L1538,232L1533,235ZM1533,247.700L1538,250.700L1533,253.700ZM1533,266.500L1538,269.500L1533,272.500ZM1533,285.200L1538,288.200L1533,291.200ZM1533,304L1538,307L1533,310ZM1533,322.700L1538,325.700L1533,328.700ZM1533,341.500L1538,344.500L1533,347.500ZM1533,360.200L1538,363.200L1533,366.200Z"/></g>

<use href="#ob" x="1554" y="119"/><text x="1567" y="123.500" textLength="56" lengthAdjust="spacingAndGlyphs" class="o">Bottle_pivot</text><use href="#wr" x="1651" y="119"/><use href="#ms" x="1670" y="119"/>
<use href="#ob" x="1554" y="138"/><text x="1567" y="142" textLength="46" lengthAdjust="spacingAndGlyphs" class="o">Cap_pivot</text><use href="#wr" x="1641" y="138"/><use href="#ms" x="1660" y="138"/>
<use href="#ob" x="1554" y="156.500"/><text x="1567" y="161" textLength="69" lengthAdjust="spacingAndGlyphs" class="o">Strip001_pivot</text><use href="#wr" x="1664" y="156.500"/><use href="#ms" x="1683" y="156.500"/>
<use href="#ob" x="1554" y="175.200"/><text x="1567" y="179.700" textLength="69" lengthAdjust="spacingAndGlyphs" class="o">Strip002_pivot</text><use href="#wr" x="1664" y="175.200"/><use href="#ms" x="1683" y="175.200"/>
<use href="#ob" x="1554" y="194"/><text x="1567" y="198.500" textLength="69" lengthAdjust="spacingAndGlyphs" class="o">Strip003_pivot</text><use href="#wr" x="1664" y="194"/><use href="#ms" x="1683" y="194"/>
<use href="#ob" x="1554" y="212.700"/><text x="1567" y="217" textLength="69" lengthAdjust="spacingAndGlyphs" class="o">Strip004_pivot</text><use href="#wr" x="1664" y="212.700"/><use href="#ms" x="1683" y="212.700"/>
<use href="#ob" x="1554" y="231.500"/><text x="1567" y="236" textLength="69" lengthAdjust="spacingAndGlyphs" class="o">Strip005_pivot</text><use href="#wr" x="1664" y="231.500"/><use href="#ms" x="1683" y="231.500"/>
<use href="#ob" x="1554" y="250.200"/><text x="1567" y="254.700" textLength="69" lengthAdjust="spacingAndGlyphs" class="o">Strip006_pivot</text><use href="#wr" x="1664" y="250.200"/><use href="#ms" x="1683" y="250.200"/>
<use href="#ob" x="1554" y="269"/><text x="1567" y="273.500" textLength="69" lengthAdjust="spacingAndGlyphs" class="o">Strip007_pivot</text><use href="#wr" x="1664" y="269"/><use href="#ms" x="1683" y="269"/>
<use href="#ob" x="1554" y="287.700"/><text x="1567" y="292" textLength="69" lengthAdjust="spacingAndGlyphs" class="o">Strip008_pivot</text><use href="#wr" x="1664" y="287.700"/><use href="#ms" x="1683" y="287.700"/>
<use href="#ob" x="1554" y="306.500"/><text x="1567" y="311" textLength="69" lengthAdjust="spacingAndGlyphs" class="o">Strip009_pivot</text><use href="#wr" x="1664" y="306.500"/><use href="#ms" x="1683" y="306.500"/>
<use href="#ob" x="1554" y="325.200"/><text x="1567" y="329.700" textLength="69" lengthAdjust="spacingAndGlyphs" class="o">Strip010_pivot</text><use href="#wr" x="1664" y="325.200"/><use href="#ms" x="1683" y="325.200"/>
<use href="#ob" x="1554" y="344"/><text x="1567" y="348.500" textLength="69" lengthAdjust="spacingAndGlyphs" class="o">Strip011_pivot</text><use href="#wr" x="1664" y="344"/><use href="#ms" x="1683" y="344"/>
<use href="#ob" x="1554" y="362.700"/><text x="1567" y="367" textLength="69" lengthAdjust="spacingAndGlyphs" class="o">Strip012_pivot</text><use href="#wr" x="1664" y="362.700"/><use href="#ms" x="1683" y="362.700"/>
<use href="#eye" x="1783" y="100"/><use href="#eye" x="1783" y="118.500"/><use href="#eye" x="1783" y="137"/><use href="#eye" x="1783" y="156"/><use href="#eye" x="1783" y="174.700"/><use href="#eye" x="1783" y="193.500"/><use href="#eye" x="1783" y="212"/><use href="#eye" x="1783" y="231"/><use href="#eye" x="1783" y="249.500"/><use href="#eye" x="1783" y="268.500"/><use href="#eye" x="1783" y="287"/><use href="#eye" x="1783" y="306"/><use href="#eye" x="1783" y="324.500"/><use href="#eye" x="1783" y="343"/><use href="#eye" x="1783" y="362"/>

<!-- PROPERTIES -->
<rect x="1488" y="375" width="310" height="684" rx="5" fill="#404040"/>
<path d="M1488,398V380a5,5 0 0 1 5,-5H1793a5,5 0 0 1 5,5V398Z" fill="#3c3c3c"/>
<path d="M1488,398H1515V1059H1493a5,5 0 0 1 -5,-5Z" fill="#232323"/>
<rect x="1497" y="377" width="28" height="18" rx="3" fill="#2b2b2b"/>
<rect x="1501" y="380" width="14" height="5.500" rx="2.700" fill="#d8d8d8"/><rect x="1501" y="387" width="14" height="5.500" rx="2.700" fill="#d8d8d8"/><circle cx="1511" cy="382.700" r="1.700" fill="#333"/><circle cx="1504" cy="389.700" r="1.700" fill="#333"/><use href="#chev" x="1520" y="386"/>
<use href="#scn" x="1546" y="386"/>
<text x="1561" y="390" textLength="28" lengthAdjust="spacingAndGlyphs" class="o">Scene</text>
<path d="M1778,391L1782,387M1782,381L1788,387L1785,388L1781,392L1780,386ZM1785,379L1790,384" stroke="#6e6e6e" fill="none"/>

<rect x="1515" y="398" width="283" height="22" fill="#4a4a4a"/>
<rect x="1515" y="420" width="283" height="81" fill="#3b3b3b"/>
<path d="M1523,406H1529L1526,411Z" fill="#9a9a9a"/>
<text x="1535" y="414" textLength="32" lengthAdjust="spacingAndGlyphs" style="font-size:12px">Scene</text>
<use href="#grip" x="1786" y="409.500"/>
<text x="1649" y="441" class="e" textLength="37" lengthAdjust="spacingAndGlyphs">Camera</text>
<text x="1649" y="464.500" class="e" textLength="87" lengthAdjust="spacingAndGlyphs">Background Scene</text>
<text x="1649" y="488" class="e" textLength="82" lengthAdjust="spacingAndGlyphs">Active Movie Clip</text>
<rect x="1658" y="429" width="133" height="17" rx="3" fill="#1c1c1c"/>
<rect x="1658" y="453" width="133" height="17" rx="3" fill="#1c1c1c"/>
<rect x="1658" y="476" width="133" height="17" rx="3" fill="#1c1c1c"/>
<rect x="1663" y="433" width="9" height="9" fill="#e6e6e6"/><path d="M1662,434V432H1664M1671,432H1673V434M1662,441V443H1664M1671,443H1673V441" fill="none" stroke="#bbb"/>
<path d="M1778,445L1780,438L1784,442ZM1783,436L1788,431L1790,433L1785,438Z" fill="#e6e6e6"/><path d="M1778,445L1775,443" stroke="#ddd"/>
<use href="#scn" x="1668" y="461"/>
<path d="M1662,484H1674V491H1662Z" fill="#e6e6e6"/><path d="M1662,480L1674,478M1662,482L1674,480" stroke="#e6e6e6" stroke-dasharray="2 1"/>

<use href="#arr" x="1526" y="513"/><text x="1535" y="517" textLength="26" lengthAdjust="spacingAndGlyphs" style="font-size:12px">Units</text><use href="#grip" x="1786" y="513"/>
<use href="#arr" x="1526" y="535.500"/><rect x="1537" y="529.500" width="12" height="12" rx="2.500" fill="#5680c2"/><path d="M1539.500,535.500L1542.500,538.500L1547,532.500" fill="none" stroke="#fff" stroke-width="1.500"/><text x="1554" y="539.500" textLength="38" lengthAdjust="spacingAndGlyphs" style="font-size:12px">Gravity</text><use href="#grip" x="1786" y="535.500"/>
<use href="#arr" x="1526" y="558"/><text x="1535" y="562" textLength="61" lengthAdjust="spacingAndGlyphs" style="font-size:12px">Keying Sets</text><use href="#grip" x="1786" y="558"/>
<use href="#arr" x="1526" y="580.500"/><text x="1535" y="584.500" textLength="30" lengthAdjust="spacingAndGlyphs" style="font-size:12px">Audio</text><use href="#grip" x="1786" y="580.500"/>
<use href="#arr" x="1526" y="603"/><text x="1535" y="607" textLength="89" lengthAdjust="spacingAndGlyphs" style="font-size:12px">Rigid Body World</text><use href="#grip" x="1786" y="603"/>
<use href="#arr" x="1526" y="625.500"/><text x="1535" y="629.500" textLength="95" lengthAdjust="spacingAndGlyphs" style="font-size:12px">Custom Properties</text><use href="#grip" x="1786" y="625.500"/>

<!-- property tabs -->
<rect x="1490" y="405" width="25" height="28" rx="3" fill="#2c2c2c"/>
<path d="M1497,411V414M1497,418H1497" stroke="#ddd" stroke-width="2"/><rect x="1495.500" y="418" width="4" height="7" fill="#ddd"/><path d="M1503,412L1506,417L1509,412M1506,417V426" stroke="#ddd" stroke-width="2" fill="none"/>
<rect x="1490" y="440" width="25" height="24" rx="3" fill="#2c2c2c"/><rect x="1490" y="466" width="25" height="24" rx="3" fill="#2c2c2c"/><rect x="1490" y="492" width="25" height="26" rx="3" fill="#2c2c2c"/>
<path d="M1497,447H1508V458H1497ZM1499,447V444H1503V447" fill="#2c2c2c" stroke="#d5d5d5" stroke-width="1.300"/><rect x="1499" y="450" width="7" height="5" fill="#d5d5d5"/>
<path d="M1496,474H1509V482H1496Z" fill="#d0d0d0"/><rect x="1499" y="477" width="7" height="8" fill="#333" stroke="#d0d0d0"/><rect x="1496" y="471" width="13" height="2" fill="#d0d0d0"/>
<use href="#img" x="1503" y="504"/>
<path d="M1490,522a3,3 0 0 1 3,-3H1515V543H1493a3,3 0 0 1 -3,-3Z" fill="#404040"/><use href="#scn" x="1503" y="531"/>
<rect x="1490" y="545" width="25" height="25" rx="3" fill="#2c2c2c"/><circle cx="1502" cy="557" r="6.500" fill="none" stroke="#a62c46" stroke-width="1.500"/><path d="M1497,555C1500,552 1503,554 1502,556C1500,558 1504,560 1502,562" stroke="#a62c46" stroke-width="2.500" fill="none"/>
<rect x="1490" y="586" width="25" height="25" rx="3" fill="#2c2c2c"/>
<rect x="1496" y="592" width="12" height="12" fill="#d0566f"/><path d="M1496,592h3v3h-3zM1502,592h3v3h-3zM1499,595h3v3h-3zM1505,595h3v3h-3zM1496,598h3v3h-3zM1502,598h3v3h-3zM1499,601h3v3h-3zM1505,601h3v3h-3z" fill="#6a2a38"/>

<!-- TIMELINE -->
<rect x="0" y="983" width="1486" height="76" rx="5" fill="#3c3c3c"/>
<rect x="0" y="1007" width="1486" height="22" fill="#2c2c2c"/>
<rect x="0" y="1029" width="1486" height="20" fill="url(#tl)"/>
<rect x="1430" y="1029" width="56" height="20" fill="#383838"/><rect x="0" y="1029" width="54" height="20" fill="#383838" opacity=".3"/>
<path d="M1430,1029V1049" stroke="#111"/>
<rect x="0" y="1049" width="1486" height="10" fill="#3a3a3a"/>
<rect x="8" y="1050" width="1468" height="8" rx="4" fill="#6e6e6e"/>
<circle cx="12" cy="1054" r="3.500" fill="#5c5c5c" stroke="#7a7a7a"/><circle cx="1472" cy="1054" r="3.500" fill="#5c5c5c" stroke="#7a7a7a"/>
<path d="M1,1027L4,1030L1,1033" fill="none" stroke="#888"/>
<path d="M1484,1026L1481,1030L1484,1034" fill="none" stroke="#999"/>

<circle cx="18" cy="996" r="6.500" fill="#dcdcdc"/><path d="M18,996L23,990V1002Z" fill="#333"/><path d="M18,992V996L15,998" stroke="#333"/><use href="#chev" x="31" y="997"/>
<rect x="43" y="985" width="63" height="20" rx="3" fill="#2e2e2e"/><rect x="108" y="985" width="54" height="20" rx="3" fill="#2e2e2e"/>
<text x="49" y="1000.500" textLength="42" lengthAdjust="spacingAndGlyphs">Playback</text><use href="#chev" x="100" y="997"/>
<text x="114" y="1000.500" textLength="33" lengthAdjust="spacingAndGlyphs">Keying</text><use href="#chev" x="157" y="997"/>
<text x="169" y="1000.500" textLength="23" lengthAdjust="spacingAndGlyphs">View</text>
<text x="207" y="1000.500" textLength="33" lengthAdjust="spacingAndGlyphs">Marker</text>

<rect x="667" y="988" width="17" height="18" rx="3" fill="#555"/><circle cx="675" cy="997" r="3.800" fill="#e8e8e8"/>
<rect x="690" y="988" width="110" height="18" rx="3" fill="#555"/>
<path d="M693,992V1002H695V992ZM702,992V1002L696,997Z M710,997L713,994L716,997L713,1000Z M716,997L719,994L722,997L719,1000Z M740,991V1003L730,997Z M748,990V1004L759,997Z M767,997L770,994L773,997L770,1000Z M773,997L776,994L779,997L776,1000Z M787,992V1002L793,997Z M794,992V1002H796V992Z" fill="#e6e6e6"/>

<rect x="1215" y="988" width="68" height="18" rx="3" fill="#545454"/>
<text x="1248" y="1001" class="m w">1</text>
<rect x="1290" y="988" width="17" height="18" rx="3" fill="#3f3f3f"/><circle cx="1298" cy="998" r="5.500" fill="none" stroke="#d8d8d8" stroke-width="1.200"/><path d="M1298,995V998H1300M1295,990H1301" stroke="#d8d8d8"/>
<rect x="1307" y="988" width="161" height="18" rx="3" fill="#545454"/><path d="M1390,988V1006" stroke="#3c3c3c"/>
<text x="1321" y="1001" textLength="26" lengthAdjust="spacingAndGlyphs" class="w">Start:</text><text x="1370" y="1001" class="w">1</text>
<text x="1405" y="1001" textLength="19" lengthAdjust="spacingAndGlyphs" class="w">End:</text><text x="1436" y="1001" textLength="19" lengthAdjust="spacingAndGlyphs" class="w">250</text>

<text class="n" x="103.600" y="1022">10</text><text class="n" x="158.900" y="1022">20</text><text class="n" x="214.200" y="1022">30</text><text class="n" x="269.400" y="1022">40</text><text class="n" x="324.700" y="1022">50</text><text class="n" x="380" y="1022">60</text><text class="n" x="435.300" y="1022">70</text><text class="n" x="490.600" y="1022">80</text><text class="n" x="545.800" y="1022">90</text><text class="n" x="601.100" y="1022">100</text><text class="n" x="656.400" y="1022">110</text><text class="n" x="711.700" y="1022">120</text><text class="n" x="767" y="1022">130</text><text class="n" x="822.200" y="1022">140</text><text class="n" x="877.500" y="1022">150</text><text class="n" x="932.800" y="1022">160</text><text class="n" x="988.100" y="1022">170</text><text class="n" x="1043.400" y="1022">180</text><text class="n" x="1098.600" y="1022">190</text><text class="n" x="1153.900" y="1022">200</text><text class="n" x="1209.200" y="1022">210</text><text class="n" x="1264.500" y="1022">220</text><text class="n" x="1319.800" y="1022">230</text><text class="n" x="1375" y="1022">240</text><text class="n" x="1430.300" y="1022">250</text>
<rect x="42" y="1009" width="24" height="18" rx="4" fill="#5680c2"/>
<text x="54.500" y="1022" class="m" style="fill:#fff">1</text>
<path d="M54.500,1027V1058" stroke="#5680c2" stroke-width="1.500"/>

<!-- STATUS BAR -->
<rect x="0" y="1059" width="1800" height="21" fill="#2e2e2e"/>
<use href="#mouse" x="15" y="1070"/><rect x="11" y="1063" width="4" height="6" fill="#c0c0c0"/>
<text x="32" y="1074" textLength="28" lengthAdjust="spacingAndGlyphs" class="s">Select</text>
<use href="#mouse" x="237" y="1070"/><rect x="236" y="1064" width="2" height="5" fill="#c0c0c0"/>
<text x="253" y="1074" textLength="102" lengthAdjust="spacingAndGlyphs" class="s">Center View to Mouse</text>
<use href="#mouse" x="458" y="1070"/><rect x="458" y="1063" width="4" height="6" fill="#c0c0c0"/>
<text x="1317" y="1074" textLength="454" lengthAdjust="spacingAndGlyphs" class="s">Collection | Verts:48,548 | Faces:44,608 | Tris:89,216 | Objects:0/17 | Mem: 38.8 MB | v2.80.75</text>
</svg>
<script>
(function(){
var NS='http://www.w3.org/2000/svg';
var O=[747,757],Vg=[-2790,-30],Vr=[1112,-160],a=0.0142,b=0.041;
function P(u){var w=1+u*a;return[(O[0]+u*a*Vg[0])/w,(O[1]+u*a*Vg[1])/w]}
function Q(v){var w=1+v*b;return[(O[0]+v*b*Vr[0])/w,(O[1]+v*b*Vr[1])/w]}
var X0=0,X1=1486,Y0=48,Y1=981;
function clip(p,q){var t0=0,t1=1,dx=q[0]-p[0],dy=q[1]-p[1],c=[[-dx,p[0]-X0],[dx,X1-p[0]],[-dy,p[1]-Y0],[dy,Y1-p[1]]];
for(var i=0;i<4;i++){var e=c[i][0],f=c[i][1];if(e===0){if(f<0)return null;continue}var r=f/e;if(e<0){if(r>t1)return null;if(r>t0)t0=r}else{if(r<t0)return null;if(r<t1)t1=r}}
return[[p[0]+t0*dx,p[1]+t0*dy],[p[0]+t1*dx,p[1]+t1*dy]]}
function ext(A,V){var dx=A[0]-V[0],dy=A[1]-V[1],s=4000/Math.sqrt(dx*dx+dy*dy);return[A[0]+dx*s,A[1]+dy*s]}
var mi=document.getElementById('gridMinor'),ma=document.getElementById('gridMajor');
function L(g,p,q){var c=clip(p,q);if(!c)return;var l=document.createElementNS(NS,'line');l.setAttribute('x1',c[0][0].toFixed(1));l.setAttribute('y1',c[0][1].toFixed(1));l.setAttribute('x2',c[1][0].toFixed(1));l.setAttribute('y2',c[1][1].toFixed(1));g.appendChild(l)}
var u,v,A;
for(u=-60;u<=60;u++){if(u===0)continue;if(u%10!==0&&u>40)continue;A=P(u);L(u%10===0?ma:mi,Vr,ext(A,Vr))}
for(v=-22;v<=130;v++){if(v===0)continue;if(v%10!==0&&v>40)continue;A=Q(v);L(v%10===0?ma:mi,Vg,ext(A,Vg))}
var k=document.getElementById('knurl');
function E(c,rx,ry,rot,t){var x=rx*Math.cos(t),y=ry*Math.sin(t),r=rot*Math.PI/180;return[c[0]+x*Math.cos(r)-y*Math.sin(r),c[1]+x*Math.sin(r)+y*Math.cos(r)]}
for(var i=0;i<=128;i++){var t=(-6+i*1.4)*Math.PI/180;var p=E([888,754],134.5,99,8,t),q=E([887,790],129,95,8,t);
var l=document.createElementNS(NS,'line');l.setAttribute('x1',p[0].toFixed(1));l.setAttribute('y1',p[1].toFixed(1));l.setAttribute('x2',q[0].toFixed(1));l.setAttribute('y2',q[1].toFixed(1));l.setAttribute('stroke',i%2?'#b8b8b8':'#828282');k.appendChild(l)}
})();
</script>
</body></html>
